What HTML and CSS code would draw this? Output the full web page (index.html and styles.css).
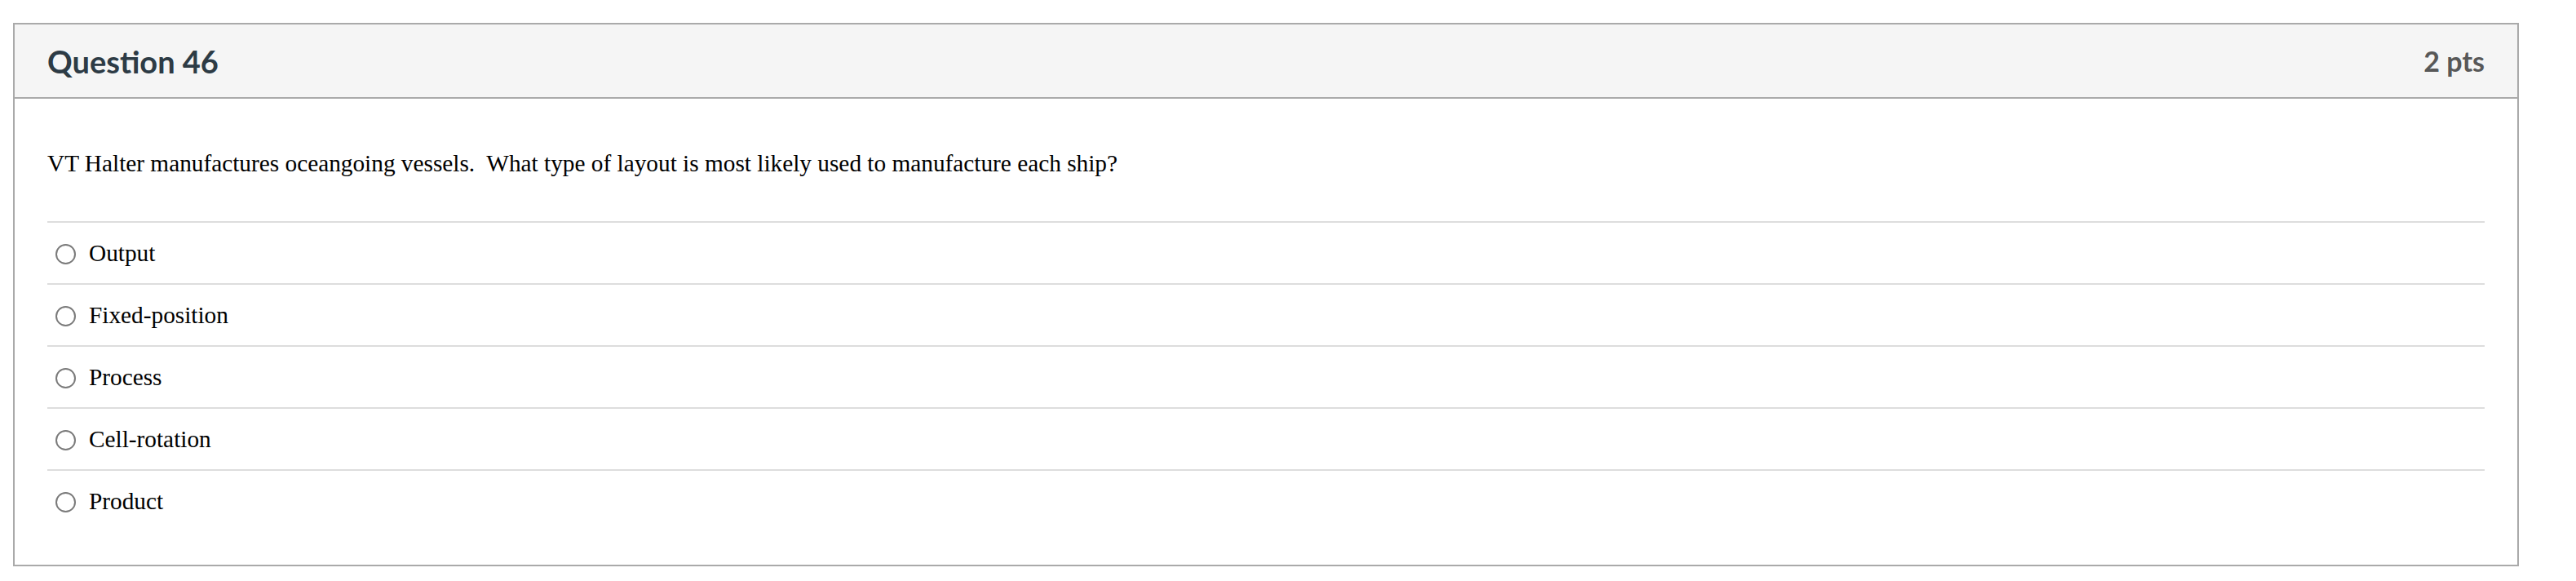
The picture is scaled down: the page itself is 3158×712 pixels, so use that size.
FILE: index.html
```html
<!DOCTYPE html>
<html lang="en">
<head>
<meta charset="utf-8">
<title>Question 46</title>
<link rel="stylesheet" href="styles.css">
</head>
<body>
<div class="question">
  <div class="header">
    <span class="question-name">Question 46</span>
    <span class="points">2 pts</span>
  </div>
  <div class="content">
    <div class="question-text">VT Halter manufactures oceangoing vessels.&nbsp; What type of layout is most likely used to manufacture each ship?</div>
    <div class="answers">
      <label class="answer"><input class="radio" type="radio" name="q46"><span class="answer-label">Output</span></label>
      <label class="answer"><input class="radio" type="radio" name="q46"><span class="answer-label">Fixed-position</span></label>
      <label class="answer"><input class="radio" type="radio" name="q46"><span class="answer-label">Process</span></label>
      <label class="answer"><input class="radio" type="radio" name="q46"><span class="answer-label">Cell-rotation</span></label>
      <label class="answer"><input class="radio" type="radio" name="q46"><span class="answer-label">Product</span></label>
    </div>
  </div>
</div>
</body>
</html>
```
FILE: styles.css
```css
html, body {
  margin: 0;
  padding: 0;
  background: #ffffff;
}

body {
  padding: 28px 0 0 16px;
}

.question {
  width: 3072px;
  box-sizing: border-box;
  border: 2px solid #aaaaaa;
  background: #ffffff;
}

.header {
  height: 91px;
  box-sizing: border-box;
  background: #f5f5f5;
  border-bottom: 2px solid #aaaaaa;
  padding: 0 40px;
  display: flex;
  align-items: center;
  justify-content: space-between;
  font-family: Lato, "Liberation Sans", sans-serif;
  font-weight: 700;
}

.question-name {
  font-size: 38px;
  color: #2d3b45;
}

.points {
  font-size: 34px;
  color: #585858;
}

.content {
  padding: 63px 40px 41px;
  font-family: "Liberation Serif", "Times New Roman", serif;
  font-size: 29.3px;
  color: #000000;
}

.question-text {
  margin-bottom: 54px;
}

.answers {
  display: flex;
  flex-direction: column;
}

.answer {
  height: 76px;
  box-sizing: border-box;
  border-top: 2px solid #dddddd;
  display: flex;
  align-items: center;
}

.radio {
  appearance: none;
  -webkit-appearance: none;
  width: 25px;
  height: 25px;
  margin: 2px 16px 0 10px;
  box-sizing: border-box;
  border: 2px solid #7a7a7a;
  border-radius: 50%;
  background: #ffffff;
  flex: none;
}
```
